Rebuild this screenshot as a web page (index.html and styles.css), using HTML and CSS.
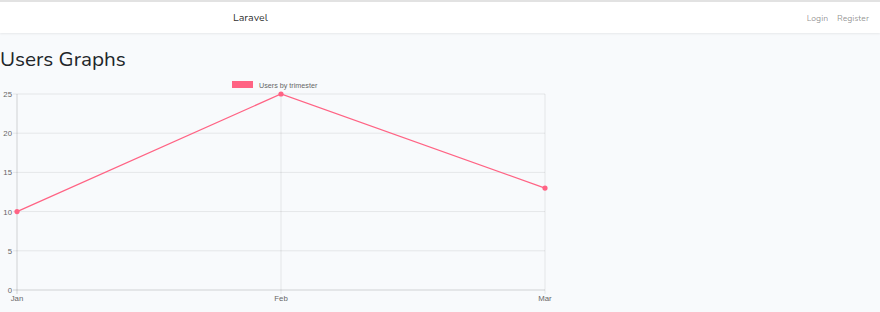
FILE: index.html
```html
<!DOCTYPE html>
<html>
  <head>
    <title>Users Graphs</title>
    <link rel="stylesheet" href="styles.css">
  </head>
  <body>
    <nav class="navbar">
      <a class="brand" href="#">Laravel</a>
      <div class="nav_links">
        <a href="#">Login</a>
        <a href="#">Register</a>
      </div>
    </nav>
    <main class="content">
      <h1 class="page_title">Users Graphs</h1>
      <div class="chart">
        <svg width="560" height="236" viewBox="0 0 560 236">
          <!-- legend -->
          <rect x="232" y="5" width="21" height="7" fill="#ff6384"/>
          <text class="legend" x="259" y="11.5">Users by trimester</text>

          <!-- horizontal grid -->
          <g class="grid">
            <line x1="13" y1="18" x2="545" y2="18"/>
            <line x1="13" y1="57.2" x2="545" y2="57.2"/>
            <line x1="13" y1="96.4" x2="545" y2="96.4"/>
            <line x1="13" y1="135.6" x2="545" y2="135.6"/>
            <line x1="13" y1="174.8" x2="545" y2="174.8"/>
            <line x1="281" y1="18" x2="281" y2="218"/>
            <line x1="545" y1="18" x2="545" y2="218"/>
          </g>
          <g class="axis">
            <line x1="17" y1="18" x2="17" y2="218"/>
            <line x1="13" y1="214" x2="545" y2="214"/>
          </g>

          <!-- y ticks -->
          <g class="tick_y">
            <text x="12" y="21">25</text>
            <text x="12" y="60.2">20</text>
            <text x="12" y="99.4">15</text>
            <text x="12" y="138.6">10</text>
            <text x="12" y="177.8">5</text>
            <text x="12" y="217">0</text>
          </g>
          <!-- x ticks -->
          <g class="tick_x">
            <text x="17" y="225">Jan</text>
            <text x="281" y="225">Feb</text>
            <text x="545" y="225">Mar</text>
          </g>

          <polyline class="line" points="17,135.6 281,18 545,112.1"/>
          <g class="points">
            <circle cx="17" cy="135.6" r="2.6"/>
            <circle cx="281" cy="18" r="2.6"/>
            <circle cx="545" cy="112.1" r="2.6"/>
          </g>
        </svg>
      </div>
    </main>
  </body>
</html>
```

FILE: styles.css
```css
/* laravel default-ish layout */
body {
  margin: 0;
  background-color: #f8fafc;
  font-family: "Nunito", Lato, "Noto Sans", sans-serif;
  color: #212529;
}

.navbar {
  display: flex;
  align-items: center;
  height: 31px;
  background-color: #fff;
  border-top: 2px solid #e2e2e2;
  box-shadow: 0 1px 2px rgba(0, 0, 0, 0.07);
  padding: 0 11px 0 233px;
  font-size: 8.6px;
}

.navbar a {
  text-decoration: none;
}

.brand {
  color: rgba(0, 0, 0, 0.85);
  font-size: 10.6px;
}

.nav_links {
  margin-left: auto;
  display: flex;
  gap: 9px;
}

.nav_links a {
  color: rgba(0, 0, 0, 0.45);
}

.content {
  padding: 0;
}

.page_title {
  margin: 12px 0 0 0;
  font-size: 20.7px;
  font-weight: 400;
  line-height: 28px;
  color: #212529;
}

.chart {
  margin-top: 3px;
}

.chart svg {
  display: block;
  font-family: "Liberation Sans", Arial, sans-serif;
}

.legend {
  font-size: 7.2px;
  fill: #666;
}

.grid line {
  stroke: rgba(0, 0, 0, 0.08);
  stroke-width: 1;
}

.axis line {
  stroke: rgba(0, 0, 0, 0.16);
  stroke-width: 1;
}

.tick_y text {
  font-size: 7.8px;
  fill: #666;
  text-anchor: end;
}

.tick_x text {
  font-size: 7.8px;
  fill: #666;
  text-anchor: middle;
}

.line {
  fill: none;
  stroke: #ff6384;
  stroke-width: 1.3;
}

.points circle {
  fill: #ff6384;
}
```
